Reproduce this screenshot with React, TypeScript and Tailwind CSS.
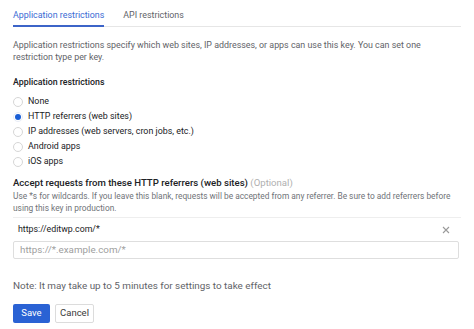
import React from "react";

function Radio({ checked, label }: { checked?: boolean; label: string }) {
  return (
    <div className="flex items-center h-[15px]">
      <span
        className={
          "w-[10px] h-[10px] rounded-full flex items-center justify-center " +
          (checked ? "border border-[#e8edf7]" : "border border-[#d6d6d6]")
        }
      >
        {checked && <span className="w-[6px] h-[6px] rounded-full bg-[#1a5fd6]" />}
      </span>
      <span className="ml-[5px] text-[8.9px] text-[#202124]">{label}</span>
    </div>
  );
}

export default function App() {
  return (
    <div
      className="w-[474px] h-[329px] bg-white overflow-hidden px-[13px]"
      style={{ fontFamily: "Roboto, 'Liberation Sans', sans-serif" }}
    >
      <div className="flex border-b border-[#e6e6e6] w-[448px] h-[27px]">
        <div className="text-[8.9px] leading-[12px] text-[#3a6ad4] pt-[9px] border-b-2 border-[#3c64c8] h-[27px] mb-[-1px]">
          Application restrictions
        </div>
        <div className="text-[8.9px] leading-[12px] text-[#5f6368] pt-[9px] ml-[19px]">API restrictions</div>
      </div>

      <p className="mt-[12px] text-[8.9px] leading-[12px] text-[#5f6368] w-[440px]">
        Application restrictions specify which web sites, IP addresses, or apps can use this key. You can set one
        restriction type per key.
      </p>

      <div className="mt-[13px] text-[8.8px] font-medium text-[#202124] leading-[12px]">Application restrictions</div>

      <div className="mt-[6px] flex flex-col">
        <Radio label="None" />
        <Radio checked label="HTTP referrers (web sites)" />
        <Radio label="IP addresses (web servers, cron jobs, etc.)" />
        <Radio label="Android apps" />
        <Radio label="iOS apps" />
      </div>

      <div className="mt-[8px] text-[9.6px] leading-[12px] font-medium text-[#202124]">
        Accept requests from these HTTP referrers (web sites){" "}
        <span className="font-normal text-[#b0b0b0]">(Optional)</span>
      </div>
      <p className="mt-[1px] text-[8.35px] leading-[12px] text-[#6f7378] w-[440px]">
        Use *s for wildcards. If you leave this blank, requests will be accepted from any referrer. Be sure to add
        referrers before using this key in production.
      </p>

      <div className="mt-[3px] w-[448px] border-t border-[#eeeeee] flex items-center justify-between h-[24px] pl-[5px]">
        <span className="text-[8.8px] text-[#202124]">https://editwp.com/*</span>
        <span className="mr-[11px] text-[#9a9a9a]">
          <svg width="8" height="8" viewBox="0 0 8 8" stroke="currentColor" strokeWidth="1.1">
            <path d="M1 1L7 7M7 1L1 7" />
          </svg>
        </span>
      </div>

      <div className="w-[446px] h-[18px] border border-[#dedede] rounded-[2px] flex items-center px-[6px]">
        <span className="text-[9.8px] text-[#a0a0a0]">https://*.example.com/*</span>
      </div>

      <div className="mt-[21px] text-[9.9px] leading-[12px] text-[#5f6368]">
        Note: It may take up to 5 minutes for settings to take effect
      </div>

      <div className="mt-[12px] flex gap-[5px]">
        <button className="w-[37px] h-[19px] bg-[#2a62d4] text-white text-[9.5px] rounded-[2px]">Save</button>
        <button className="w-[39px] h-[19px] bg-white border border-[#dcdcdc] text-[#3a3a3a] text-[9.5px] rounded-[2px]">
          Cancel
        </button>
      </div>
    </div>
  );
}
